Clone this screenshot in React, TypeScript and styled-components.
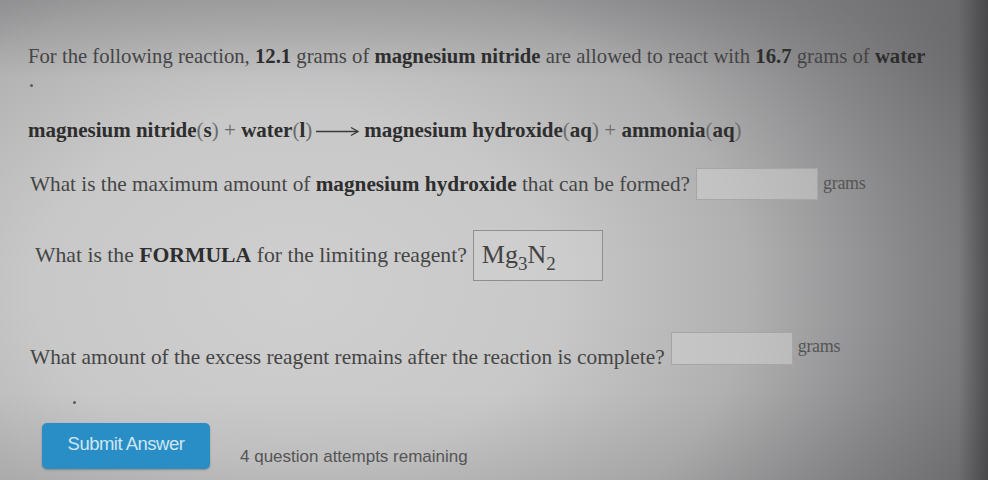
import { FunctionComponent } from "react";
import styled, { createGlobalStyle } from "styled-components";

const GlobalStyle = createGlobalStyle`
  html, body {
    margin: 0;
    padding: 0;
  }
  body {
    width: 988px;
    height: 480px;
    overflow: hidden;
    font-family: "Liberation Serif", "Times New Roman", serif;
  }
`;

const Screen = styled.div`
  position: relative;
  width: 988px;
  height: 480px;
  box-sizing: border-box;
  padding: 44px 0 0 28px;
  display: flex;
  flex-direction: column;
  color: #454545;
  background:
    linear-gradient(90deg, rgba(0, 0, 0, 0) 0%, rgba(0, 0, 0, 0) 97%, rgba(40, 40, 44, 0.3) 98.8%, rgba(40, 40, 44, 0.5) 100%),
    linear-gradient(180deg, rgba(120, 120, 122, 0.4) 0%, rgba(0, 0, 0, 0) 16%, rgba(0, 0, 0, 0) 82%, rgba(90, 90, 92, 0.12) 100%),
    radial-gradient(ellipse 82% 115% at 30% 60%, #cfcfcf 0%, #c8c8c8 32%, #b0b0b1 56%, #878789 76%, #5c5c5e 100%);
`;

const Line = styled.div<{ $indent?: number; $top?: number; $size?: number; $align?: string }>`
  display: flex;
  align-items: ${({ $align }) => $align ?? "center"};
  margin-top: ${({ $top }) => $top ?? 0}px;
  padding-left: ${({ $indent }) => $indent ?? 0}px;
  font-size: ${({ $size }) => $size ?? 21}px;
  line-height: 25px;
  white-space: nowrap;
`;

const Text = styled.span<{ $dy?: number }>`
  margin-top: ${({ $dy }) => $dy ?? 0}px;
`;

const B = styled.b`
  font-weight: bold;
  color: #2e2e2e;
`;

const Light = styled.span`
  font-weight: normal;
  color: #6a6a6a;
`;

const ArrowWrap = styled.span`
  display: inline-flex;
  align-items: center;
  margin: 0 5px 0 4px;
`;

const Dot = styled.span<{ $left: number; $top: number }>`
  display: block;
  width: 3px;
  height: 3px;
  margin: ${({ $top }) => $top}px 0 0 ${({ $left }) => $left}px;
  border-radius: 50%;
  background: #5a5a5a;
`;

const AnswerBox = styled.div<{ $w: number; $h: number }>`
  width: ${({ $w }) => $w}px;
  height: ${({ $h }) => $h}px;
  margin-left: 6px;
  box-sizing: border-box;
  border: 1px solid #a6a6a6;
  background: rgba(212, 212, 212, 0.5);
`;

const Unit = styled.span<{ $dy?: number }>`
  margin-left: 5px;
  margin-top: ${({ $dy }) => $dy ?? 0}px;
  font-size: 18px;
  line-height: 20px;
  color: #555;
  letter-spacing: -0.3px;
`;

const FormulaBox = styled.div`
  width: 130px;
  height: 51px;
  margin-left: 6px;
  box-sizing: border-box;
  border: 1px solid #8f8f8f;
  padding: 11px 0 0 8px;
  font-size: 26px;
  line-height: 26px;
  color: #444;
  background: rgba(215, 215, 215, 0.35);
`;

const Sub = styled.sub`
  font-size: 19px;
  line-height: 0;
  vertical-align: -7px;
`;

const Footer = styled.div`
  display: flex;
  align-items: flex-end;
  margin-top: 19px;
  padding-left: 14px;
  font-family: "Liberation Sans", Arial, sans-serif;
`;

const SubmitButton = styled.button`
  width: 168px;
  height: 46px;
  box-sizing: border-box;
  padding: 0 0 5px 0;
  border: none;
  border-radius: 5px;
  background: #2a8ec6;
  color: #cfe6f2;
  font-family: "Liberation Sans", Arial, sans-serif;
  font-size: 18.5px;
  letter-spacing: -0.5px;
  box-shadow: 0 1px 2px rgba(0, 0, 0, 0.25);
`;

const Attempts = styled.span`
  margin: 0 0 3px 30px;
  font-size: 17px;
  line-height: 18px;
  color: #555;
`;

const LongArrow: FunctionComponent = () => (
  <ArrowWrap>
    <svg width="43" height="12" viewBox="0 0 43 12">
      <line x1="0" y1="6.5" x2="41" y2="6.5" stroke="#3a3a3a" strokeWidth="1.3" />
      <path d="M35 2.5 L42 6.5 L35 10.5" fill="none" stroke="#3a3a3a" strokeWidth="1.3" />
    </svg>
  </ArrowWrap>
);

const App: FunctionComponent = () => {
  return (
    <>
      <GlobalStyle />
      <Screen>
        <Line $size={20.7}>
          For the following reaction,&nbsp;<B>12.1</B>&nbsp;grams of&nbsp;
          <B>magnesium nitride</B>&nbsp;are allowed to react with&nbsp;
          <B>16.7</B>&nbsp;grams of&nbsp;<B>water</B>
        </Line>
        <Dot $left={2} $top={15} />
        <Line $top={31}>
          <B>
            magnesium nitride<Light>(</Light>s<Light>)</Light>
          </B>
          <Light>&nbsp;+&nbsp;</Light>
          <B>
            water<Light>(</Light>l<Light>)</Light>
          </B>
          <LongArrow />
          <B>
            magnesium hydroxide<Light>(</Light>aq<Light>)</Light>
          </B>
          <Light>&nbsp;+&nbsp;</Light>
          <B>
            ammonia<Light>(</Light>aq<Light>)</Light>
          </B>
        </Line>
        <Line $top={25} $indent={2} $size={21.25}>
          What is the maximum amount of&nbsp;<B>magnesium hydroxide</B>
          &nbsp;that can be formed?
          <AnswerBox $w={122} $h={32} />
          <Unit $dy={-2}>grams</Unit>
        </Line>
        <Line $top={30} $indent={7} $size={21.7}>
          What is the&nbsp;<B>FORMULA</B>&nbsp;for the limiting reagent?
          <FormulaBox>
            Mg<Sub>3</Sub>N<Sub>2</Sub>
          </FormulaBox>
        </Line>
        <Line $top={51} $indent={2} $size={21.35} $align="flex-start">
          <Text $dy={13}>
            What amount of the excess reagent remains after the reaction is complete?
          </Text>
          <AnswerBox $w={122} $h={33} />
          <Unit $dy={4}>grams</Unit>
        </Line>
        <Dot $left={45} $top={31} />
        <Footer>
          <SubmitButton>Submit Answer</SubmitButton>
          <Attempts>4 question attempts remaining</Attempts>
        </Footer>
      </Screen>
    </>
  );
};

export default App;
